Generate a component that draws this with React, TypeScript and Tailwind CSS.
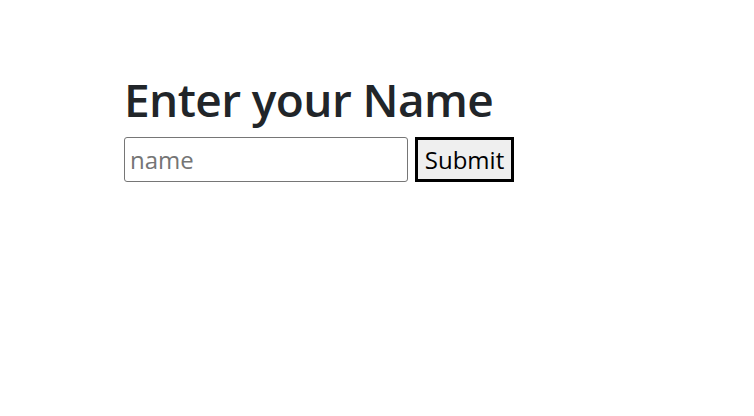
export default function App() {
  return (
    <div className="min-h-screen bg-white font-['Open_Sans',sans-serif]">
      <div className="pl-[124px] pt-[72px]">
        <h1 className="mb-[10px] text-[46px] font-semibold leading-[1.2] tracking-[-0.6px] text-[#212529]">
          Enter your Name
        </h1>
        <form className="flex items-start gap-[7px]" onSubmit={(e) => e.preventDefault()}>
          <input
            type="text"
            placeholder="name"
            className="h-[45px] w-[284px] rounded-[3px] border border-[#767676] px-[5px] text-[24px] text-black placeholder:text-[#757575] outline-none"
          />
          <button
            type="submit"
            className="h-[45px] w-[99px] border-[3px] border-black bg-[#efefef] text-[24px] text-black"
          >
            Submit
          </button>
        </form>
      </div>
    </div>
  );
}
